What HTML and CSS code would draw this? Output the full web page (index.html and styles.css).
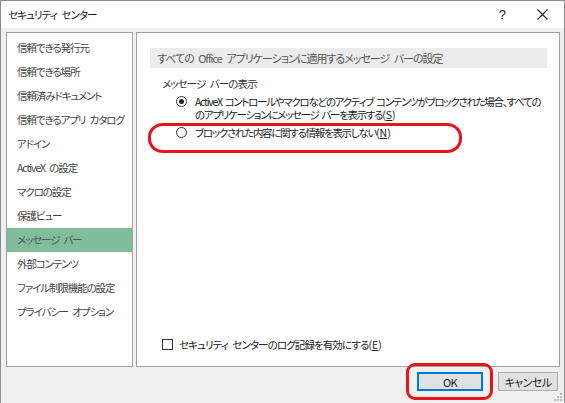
FILE: index.html
```html
<!DOCTYPE html>
<html lang="ja">
<head>
	<meta charset="UTF-8">
	<title>セキュリティ センター</title>
	<link rel="stylesheet" href="styles.css">
</head>
<body>
<div class="window">
	<div class="titlebar">
		<span class="title">セキュリティ センター</span>
		<span class="help">?</span>
		<span class="close">
			<svg width="11" height="11" viewBox="0 0 11 11"><path d="M0.5 0.5 L10.5 10.5 M10.5 0.5 L0.5 10.5" stroke="#222" stroke-width="1.1" fill="none"/></svg>
		</span>
	</div>
	<div class="body">
		<div class="panes">
			<ul class="nav">
				<li>信頼できる発行元</li>
				<li>信頼できる場所</li>
				<li>信頼済みドキュメント</li>
				<li>信頼できるアプリ カタログ</li>
				<li>アドイン</li>
				<li>ActiveX の設定</li>
				<li>マクロの設定</li>
				<li>保護ビュー</li>
				<li class="on">メッセージ バー</li>
				<li>外部コンテンツ</li>
				<li>ファイル制限機能の設定</li>
				<li>プライバシー オプション</li>
			</ul>
			<div class="main">
				<div class="section-head">すべての Office アプリケーションに適用するメッセージ バーの設定</div>
				<div class="group">
					<div class="group-label">メッセージ バーの表示</div>
					<div class="radio-row">
						<span class="radio checked"></span>
						<span class="radio-text">ActiveX コントロールやマクロなどのアクティブ コンテンツがブロックされた場合、すべての<br>のアプリケーションにメッセージ バーを表示する<span class="key">(<u>S</u>)</span></span>
					</div>
					<div class="radio-row">
						<span class="radio"></span>
						<span class="radio-text">ブロックされた内容に関する情報を表示しない<span class="key">(<u>N</u>)</span></span>
					</div>
					<div class="mark mark-radio"></div>
				</div>
				<div class="check-row">
					<span class="checkbox"></span>
					<span>セキュリティ センターのログ記録を有効にする<span class="key">(<u>E</u>)</span></span>
				</div>
			</div>
		</div>
		<div class="buttons">
			<div class="btn-wrap">
				<button class="btn default">OK</button>
				<div class="mark mark-ok"></div>
			</div>
			<button class="btn">キャンセル</button>
		</div>
		<svg class="grip" width="9" height="9" viewBox="0 0 9 9" fill="#b8b8b8">
			<rect x="7" y="1" width="2" height="2"/>
			<rect x="4" y="4" width="2" height="2"/><rect x="7" y="4" width="2" height="2"/>
			<rect x="1" y="7" width="2" height="2"/><rect x="4" y="7" width="2" height="2"/><rect x="7" y="7" width="2" height="2"/>
		</svg>
	</div>
</div>
</body>
</html>
```

FILE: styles.css
```css
* {
	margin: 0;
	padding: 0;
	list-style: none;
	box-sizing: border-box;
}
body {
	background: #f0f0f0;
	font-family: "Noto Sans CJK JP", "Noto Sans", sans-serif;
	font-size: 10.5px;
	letter-spacing: -0.9px;
	word-spacing: 3px;
	font-feature-settings: "palt";
	color: #222;
	overflow: hidden;
}
.window {
	width: 565px;
	height: 403px;
	border: 1px solid #8c8c8c;
	border-bottom: none;
	background: #f0f0f0;
	overflow: hidden;
}
.titlebar {
	height: 27px;
	background: #fff;
	display: flex;
	align-items: center;
	padding-left: 7px;
}
.title {
	flex: 1;
	color: #1a1a1a;
}
.help {
	width: 40px;
	text-align: center;
	font-family: "Liberation Sans", sans-serif;
	font-size: 13px;
}
.close {
	width: 40px;
	display: flex;
	justify-content: center;
	margin-right: 2px;
}
.body {
	position: relative;
	padding: 4px 4px 0 5px;
}
.panes {
	display: flex;
	gap: 3px;
	height: 335px;
}
.nav {
	flex: none;
	width: 127px;
	background: #fff;
	border: 1px solid #a0a0a0;
	padding-top: 3px;
}
.nav li {
	height: 24px;
	line-height: 24px;
	padding-left: 10px;
	color: #444;
	white-space: nowrap;
	letter-spacing: -1.1px;
}
.nav .on {
	background: #80bd9b;
	color: #555;
}
.main {
	flex: 1;
	min-width: 0;
	background: #fff;
	border: 1px solid #a0a0a0;
	padding: 15px 12px 15px 13px;
	display: flex;
	flex-direction: column;
}
.section-head {
	height: 20px;
	line-height: 20px;
	background: #ececec;
	color: #555;
	padding-left: 7px;
	font-size: 11px;
	letter-spacing: -1px;
}
.group {
	position: relative;
	padding-left: 12px;
	flex: 1;
}
.group-label {
	margin-top: 9px;
	line-height: 14px;
	color: #333;
}
.radio-row {
	display: flex;
	align-items: flex-start;
	margin-top: 4px;
	line-height: 13px;
}
.radio-row + .radio-row {
	margin-top: 5px;
}
.radio {
	width: 11px;
	height: 11px;
	border: 1px solid #333;
	border-radius: 50%;
	margin: 1px 8px 0 14px;
	display: flex;
	align-items: center;
	justify-content: center;
	flex-shrink: 0;
}
.radio.checked::after {
	content: "";
	width: 5px;
	height: 5px;
	border-radius: 50%;
	background: #222;
}
.radio-text {
	white-space: nowrap;
	letter-spacing: -1.3px;
	word-spacing: 2px;
}
.key {
	letter-spacing: 0;
}
.check-row {
	display: flex;
	align-items: center;
	gap: 6px;
	padding-left: 12px;
	line-height: 13px;
}
.checkbox {
	width: 11px;
	height: 11px;
	border: 1px solid #333;
}
.buttons {
	display: flex;
	justify-content: flex-end;
	gap: 15px;
	padding: 5px 2px 0 0;
}
.btn-wrap {
	position: relative;
}
.btn {
	width: 60px;
	height: 19px;
	background: #e1e1e1;
	border: 1px solid #adadad;
	font-family: inherit;
	font-size: 11px;
	letter-spacing: -0.6px;
	font-feature-settings: "palt";
	color: #222;
}
.btn.default {
	width: 66px;
	border: 2px solid #0078d7;
}
.mark {
	position: absolute;
	border: 3px solid #e8141c;
	pointer-events: none;
}
.mark-radio {
	left: -2px;
	top: 55px;
	width: 314px;
	height: 30px;
	border-radius: 15px / 14px;
}
.mark-ok {
	left: -11px;
	top: -9px;
	width: 87px;
	height: 37px;
	border-radius: 9px;
}
.grip {
	position: absolute;
	right: 2px;
	top: 364px;
}
```
